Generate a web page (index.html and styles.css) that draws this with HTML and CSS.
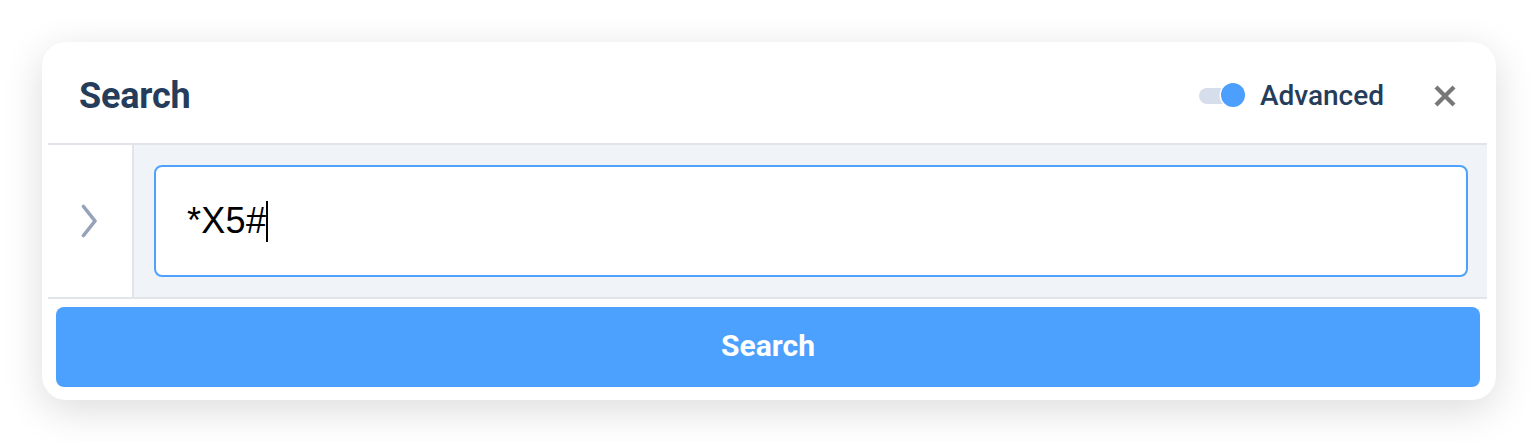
FILE: index.html
```html
<!DOCTYPE html>
<html lang="en">
<head>
    <meta charset="UTF-8">
    <meta name="viewport" content="width=device-width, initial-scale=1.0">
    <title>Search</title>
    <link rel="stylesheet" href="styles.css">
</head>
<body>

    <div class="panel">
        <div class="panel-head">
            <h2 class="title">Search</h2>
            <div class="head-tools">
                <label class="toggle">
                    <span class="toggle-track"><span class="toggle-knob"></span></span>
                    <span class="toggle-label">Advanced</span>
                </label>
                <button class="close" aria-label="Close">
                    <svg width="24" height="24" viewBox="0 0 24 24">
                        <path d="M3 3 L21 21 M21 3 L3 21" stroke="#777" stroke-width="4.2" stroke-linecap="butt" fill="none"/>
                    </svg>
                </button>
            </div>
        </div>

        <div class="query-row">
            <div class="row-gutter">
                <svg width="18" height="34" viewBox="0 0 18 34">
                    <path d="M2.5 2.5 L14 17 L2.5 31.5" stroke="#95a2b9" stroke-width="3.6" stroke-linecap="round" stroke-linejoin="round" fill="none"/>
                </svg>
            </div>
            <div class="row-body">
                <div class="query-input">
                    <span class="query-text">*X5#</span><span class="caret"></span>
                </div>
            </div>
        </div>

        <div class="panel-foot">
            <button class="search-btn">Search</button>
        </div>
    </div>

</body>
</html>
```

FILE: styles.css
```css
body {
    font-family: Roboto, "Liberation Sans", sans-serif;
    margin: 0;
    background-color: #fff;
    width: 1537px;
    height: 442px;
    overflow: hidden;
}

.panel {
    margin: 42px 0 0 42px;
    width: 1454px;
    height: 358px;
    background: #fff;
    border-radius: 24px;
    box-shadow: 0 10px 40px rgba(0, 0, 0, 0.14);
    box-sizing: border-box;
    padding: 0 9px 0 6px;
    display: flex;
    flex-direction: column;
}

.panel-head {
    height: 101px;
    box-sizing: border-box;
    display: flex;
    align-items: center;
    justify-content: space-between;
    padding: 6px 30px 0 31px;
}

.title {
    margin: 0;
    font-size: 36px;
    font-weight: 700;
    color: #253d5b;
    letter-spacing: -0.2px;
}

.head-tools {
    display: flex;
    align-items: center;
}

.toggle {
    display: flex;
    align-items: center;
}

.toggle-track {
    position: relative;
    width: 36px;
    height: 16px;
    border-radius: 8px;
    background: #d5deea;
    margin-right: 17px;
}

/* кружок поверх дорожки */
.toggle-knob {
    position: absolute;
    left: 22px;
    top: -5px;
    width: 24px;
    height: 24px;
    border-radius: 50%;
    background: #4c9ffd;
    box-shadow: 0 0 0 1.5px #fff;
}

.toggle-label {
    font-size: 28px;
    font-weight: 500;
    color: #253d5b;
    margin-left: 8px;
}

.close {
    background: none;
    border: none;
    padding: 0;
    margin-left: 49px;
    width: 24px;
    height: 24px;
    display: flex;
    cursor: pointer;
}

.query-row {
    display: flex;
    height: 156px;
    border-top: 2px solid #e1e4e9;
    border-bottom: 2px solid #e1e4e9;
    box-sizing: border-box;
}

.row-gutter {
    width: 84px;
    border-right: 2px solid #e1e4e9;
    display: flex;
    align-items: center;
    justify-content: center;
}

.row-body {
    flex: 1;
    background: #f0f4f9;
    padding: 20px 19px 20px 20px;
}

.query-input {
    height: 100%;
    box-sizing: border-box;
    background: #fff;
    border: 2px solid #4fa2fb;
    border-radius: 8px;
    display: flex;
    align-items: center;
    padding-left: 31px;
}

.query-text {
    font-family: "Liberation Sans", Arial, sans-serif;
    font-size: 36px;
    letter-spacing: 0.3px;
    color: #000;
}

.caret {
    display: inline-block;
    width: 2px;
    height: 41px;
    background: #000;
    margin-left: 0;
}

.panel-foot {
    padding: 8px 7px 0 8px;
}

.search-btn {
    width: 100%;
    height: 80px;
    border: none;
    border-radius: 8px;
    background: #4da1fe;
    color: #fff;
    font-family: Roboto, "Liberation Sans", sans-serif;
    font-size: 30px;
    font-weight: 700;
    padding: 0 0 4px;
    cursor: pointer;
}
```
